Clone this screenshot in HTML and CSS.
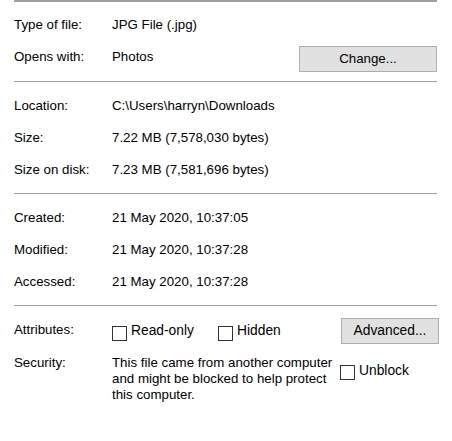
FILE: index.html
```html
<!DOCTYPE html>
<html>
<head>
<meta charset="utf-8">
<link rel="stylesheet" href="styles.css">
</head>
<body>
<div class="panel">
  <div class="rule-top"></div>
  <section class="group g1">
    <div class="row"><span class="label">Type of file:</span><span class="value">JPG File (.jpg)</span></div>
    <div class="row"><span class="label">Opens with:</span><span class="value">Photos</span><button class="btn btn-change">Change...</button></div>
  </section>
  <hr class="sep">
  <section class="group">
    <div class="row"><span class="label">Location:</span><span class="value">C:\Users\harryn\Downloads</span></div>
    <div class="row"><span class="label">Size:</span><span class="value">7.22 MB (7,578,030 bytes)</span></div>
    <div class="row"><span class="label">Size on disk:</span><span class="value">7.23 MB (7,581,696 bytes)</span></div>
  </section>
  <hr class="sep">
  <section class="group">
    <div class="row"><span class="label">Created:</span><span class="value">21 May 2020, 10:37:05</span></div>
    <div class="row"><span class="label">Modified:</span><span class="value">21 May 2020, 10:37:28</span></div>
    <div class="row"><span class="label">Accessed:</span><span class="value">21 May 2020, 10:37:28</span></div>
  </section>
  <hr class="sep">
  <section class="group last">
    <div class="row">
      <span class="label attr-label">Attributes:</span>
      <span class="check check-first"><span class="box"></span>Read-only</span>
      <span class="check"><span class="box"></span>Hidden</span>
      <button class="btn btn-adv">Advanced...</button>
    </div>
    <div class="row row-sec">
      <span class="label sec-label">Security:</span>
      <span class="sec-text">This file came from another computer<br>and might be blocked to help protect<br>this computer.</span>
      <span class="check check-unblock"><span class="box"></span>Unblock</span>
    </div>
  </section>
</div>
</body>
</html>
```

FILE: styles.css
```css
html, body {
  margin: 0;
  background: #ffffff;
}

body {
  font-family: "Liberation Sans", Arial, sans-serif;
  font-size: 13.3px;
  line-height: 16px;
  color: #000000;
}

.panel {
  padding: 0 15px 0 14px;
}

.rule-top {
  height: 2px;
  background: #a0a0a0;
}

.group {
  padding: 8px 0 7px;
}

.g1 {
  padding-top: 7px;
  padding-bottom: 8px;
}

.sep {
  height: 1px;
  border: 0;
  margin: 0;
  background: #a0a0a0;
}

.row {
  display: flex;
  align-items: flex-start;
  height: 32px;
}

.label {
  flex: none;
  width: 98px;
  padding-top: 8px;
  white-space: nowrap;
}

.value {
  padding-top: 8px;
  white-space: nowrap;
}

.btn {
  margin-left: auto;
  height: 26px;
  padding: 0;
  background: #e1e1e1;
  border: 1px solid #adadad;
  border-radius: 0;
  font: inherit;
  color: #000000;
}

.btn-change {
  width: 138px;
  margin-top: 5px;
}

.btn-adv {
  width: 98px;
  margin-top: 4px;
  margin-right: -2px;
  font-size: 13.8px;
}

.attr-label {
  padding-top: 8px;
}

.check {
  display: flex;
  align-items: flex-start;
  padding-top: 9px;
  white-space: nowrap;
  font-size: 13.8px;
}

.check-first {
  flex: none;
  width: 106px;
}

.box {
  flex: none;
  width: 13px;
  height: 13px;
  border: 1px solid #333333;
  margin-top: 3px;
  margin-right: 4px;
  background: #ffffff;
}

.row-sec {
  height: auto;
}

.sec-label {
  padding-top: 9px;
}

.sec-text {
  flex: none;
  width: 228px;
  padding-top: 9px;
}

.check-unblock {
  padding-top: 17px;
}

.check-unblock .box {
  margin-top: 2px;
}
```
